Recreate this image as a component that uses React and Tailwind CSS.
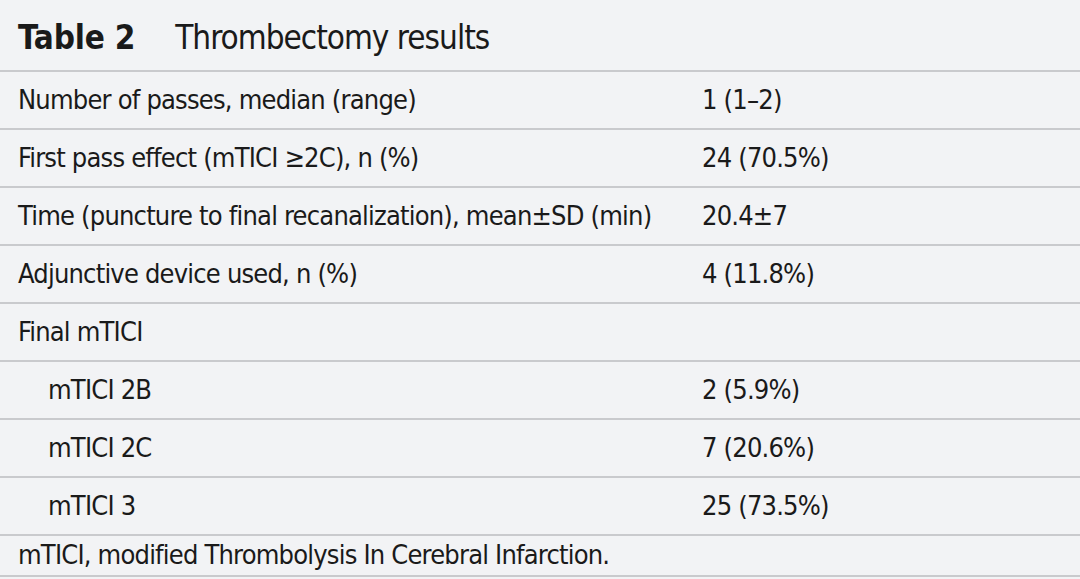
import * as React from "react";

const rows = [
    { label: "Number of passes, median (range)", value: "1 (1\u20132)" },
    { label: "First pass effect (mTICI \u22652C), n (%)", value: "24 (70.5%)" },
    { label: "Time (puncture to final recanalization), mean\u00b1SD (min)", value: "20.4\u00b17" },
    { label: "Adjunctive device used, n (%)", value: "4 (11.8%)" },
    { label: "Final mTICI", value: "" },
    { label: "mTICI 2B", value: "2 (5.9%)", indent: true },
    { label: "mTICI 2C", value: "7 (20.6%)", indent: true },
    { label: "mTICI 3", value: "25 (73.5%)", indent: true },
];

function App() {
    return (
        <div
            className="w-[1080px] h-[579px] bg-[#f2f3f5] text-[#1a1a1a] overflow-hidden"
            style={{ fontFamily: '"DejaVu Sans Condensed", "Liberation Sans", sans-serif' }}
        >
            <div className="h-[72px] border-b-2 border-[#c9cacd] flex items-center pt-[6px] px-[18px] whitespace-nowrap">
                <span className="text-[33px] font-bold tracking-[-0.2px]">Table 2</span>
                <span className="text-[33px] ml-[40px] tracking-[-1px]">Thrombectomy results</span>
            </div>
            {rows.map((r, i) => (
                <div
                    key={i}
                    className="h-[58px] border-b-2 border-[#c9cacd] grid grid-cols-[684px_1fr] items-center px-[18px] text-[27px] tracking-[-0.8px] whitespace-nowrap"
                >
                    <span className={r.indent ? "pl-[30px]" : ""}>{r.label}</span>
                    <span>{r.value}</span>
                </div>
            ))}
            <div className="h-[41px] border-b-2 border-[#c9cacd] flex items-center px-[18px] text-[27px] tracking-[-0.8px] whitespace-nowrap">
                mTICI, modified Thrombolysis In Cerebral Infarction.
            </div>
        </div>
    );
}

export default App;
